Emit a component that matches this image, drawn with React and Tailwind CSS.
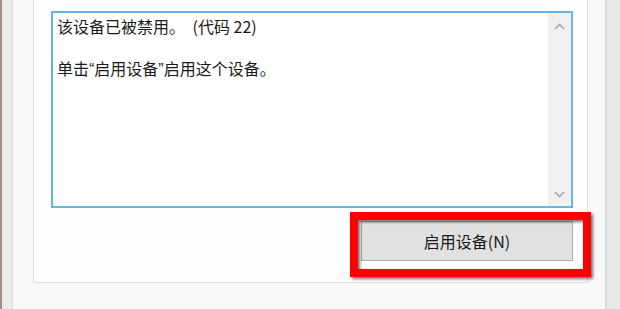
import React from 'react'

const ChevronUp = () => (
  <svg width="11" height="7" viewBox="0 0 11 7" fill="none">
    <polyline points="1,6 5.5,1.5 10,6" stroke="#a8a8a8" strokeWidth="1.6" />
  </svg>
)

const ChevronDown = () => (
  <svg width="11" height="7" viewBox="0 0 11 7" fill="none">
    <polyline points="1,1 5.5,5.5 10,1" stroke="#a8a8a8" strokeWidth="1.6" />
  </svg>
)

const q = (c) => <span className="font-['Liberation_Sans',sans-serif]">{c}</span>

export default function App() {
  return (
    <div className="w-[620px] h-[309px] flex overflow-hidden bg-[#f9f9f9] font-['Noto_Sans_CJK_SC','Microsoft_YaHei',sans-serif] text-[#1a1a1a]">
      {/* left window edge */}
      <div className="w-[2px] h-full bg-[#ad8a80]" />
      <div className="w-[10px] h-full bg-[#ececec]" />
      <div className="w-[1px] h-full bg-[#dcdcdc]" />

      {/* dialog body */}
      <div className="w-[592px] h-full bg-[#f9f9f9] pl-[20px]">
        <div className="w-[555px] h-[283px] bg-[#fefefe] border-l border-r border-b border-[#dedede] pl-[17px] pt-[11px]">
          <div className="w-[522px] h-[197px] border-2 border-[#66b5e6] bg-white flex">
            <div className="flex-1 pl-[4px] pt-[3px] text-[16px] leading-[21px]">
              <div>该设备已被禁用。 <span className="ml-[4px]">(代码 22)</span></div>
              <div className="h-[21px]" />
              <div>单击{q('“')}启用设备{q('”')}启用这个设备。</div>
            </div>
            <div className="w-[23px] h-full bg-[#f0f0f0] flex flex-col items-center justify-between pt-[10px] pb-[8px]">
              <ChevronUp />
              <ChevronDown />
            </div>
          </div>

          <div className="w-[522px] flex justify-end mt-[13px]">
            <div className="relative">
              <button className="w-[212px] h-[40px] bg-[#e1e1e1] border border-[#adadad] text-[16px] text-[#1a1a1a] flex items-center justify-center">
                启用设备(N)
              </button>
              <div className="absolute left-[-11px] right-[-18px] top-[-9px] bottom-[-16px] border-[8px] border-[#ff0000] drop-shadow-[2px_2px_1.5px_rgba(0,0,0,0.55)] pointer-events-none" />
            </div>
          </div>
        </div>
      </div>

      {/* right window edge */}
      <div className="w-[2px] h-full bg-[#d6d6d6]" />
      <div className="flex-1 h-full bg-[#e9e9e9]" />
    </div>
  )
}
